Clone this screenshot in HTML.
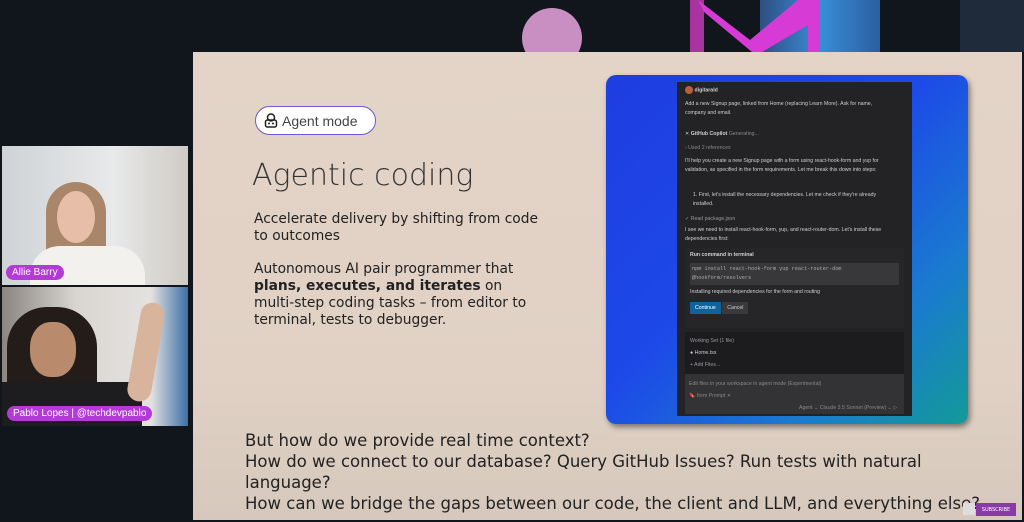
<!DOCTYPE html>
<html><head><meta charset="utf-8"><style>
*{margin:0;padding:0;box-sizing:border-box}
body{width:1024px;height:522px;overflow:hidden;background:#11151c;font-family:"DejaVu Sans","Liberation Sans",sans-serif;position:relative}
.abs{position:absolute}
.slide{left:193px;top:52px;width:829px;height:468px;background:linear-gradient(#e3d4c7,#e0d1c4 70%,#d6c8bc)}
.pill{left:255px;top:106px;width:121px;height:29px;border:1.5px solid #6a5bd0;border-radius:15px;background:#fff;font-family:"Liberation Sans",sans-serif;font-size:14px;color:#444;padding:6px 0 0 26px}
.t{color:#222;font-size:13.8px;line-height:17px}
.card{left:606px;top:75px;width:362px;height:349px;border-radius:10px;background:linear-gradient(135deg,#1e3de0 0%,#1d49e8 45%,#1a7ad0 75%,#139a98 100%);box-shadow:2px 3px 6px rgba(0,0,0,.45)}
.panel{left:677px;top:82px;width:235px;height:334px;background:#232325;color:#cfcfcf;font-size:5.2px;line-height:9px;padding:4px 8px;font-family:"Liberation Sans",sans-serif;overflow:hidden}
.panel>div{position:absolute;left:8px;right:8px}
.cam{background:#d9d6d2;overflow:hidden}
.tag{background:#b43ad8;color:#fff;font-family:"Liberation Sans",sans-serif;font-size:10px;border-radius:8px;padding:2px 6px;position:absolute}
.q{font-size:16.5px;color:#222;left:245px;line-height:21px}
</style></head><body>
<div class="abs" style="left:522px;top:8px;width:60px;height:60px;border-radius:50%;background:#c98fc3"></div>
<div class="abs" style="left:690px;top:0;width:14px;height:52px;background:#a8359f"></div>
<div class="abs" style="left:760px;top:0;width:120px;height:52px;background:linear-gradient(90deg,#2e4f82,#3a8dd8,#2a5fa0)"></div>
<svg class="abs" style="left:690px;top:0" width="220" height="52"><path d="M8 0 L60 40 L108 0 L130 0 L130 52 L118 52 L118 25 L72 52 L62 52 L14 12 Z" fill="#d73bd6"/></svg>
<div class="abs" style="left:960px;top:0;width:64px;height:52px;background:#1f2a3a"></div>

<div class="abs slide"></div>
<div class="abs pill"><svg class="abs" style="left:8px;top:6px" width="14" height="15" viewBox="0 0 14 15"><circle cx="7" cy="4.5" r="3.5" fill="none" stroke="#222" stroke-width="1.5"/><rect x="1.5" y="7" width="11" height="7" rx="2" fill="none" stroke="#222" stroke-width="1.5"/><circle cx="5" cy="10.5" r="1" fill="#222"/><circle cx="9" cy="10.5" r="1" fill="#222"/></svg>Agent mode</div>
<div class="abs" style="left:252px;top:158px;font-size:30px;font-weight:200;color:#333;font-family:'DejaVu Sans',sans-serif">Agentic coding</div>
<div class="abs t" style="left:254px;top:211px">Accelerate delivery by shifting from code<br>to outcomes</div>
<div class="abs t" style="left:254px;top:261px">Autonomous AI pair programmer that<br><b>plans, executes, and iterates</b> on<br>multi-step coding tasks – from editor to<br>terminal, tests to debugger.</div>

<div class="abs card"></div>
<div class="abs panel">
<div style="top:4px"><span style="display:inline-block;width:8px;height:8px;border-radius:50%;background:#b8603e;vertical-align:middle"></span> <b>digitarald</b></div>
<div style="top:18px;right:20px">Add a new Signup page, linked from Home (replacing Learn More). Ask for name, company and email.</div>
<div style="top:48px">✕ <b>GitHub Copilot</b> <span style="color:#888">Generating...</span></div>
<div style="top:62px;color:#888">› Used 2 references</div>
<div style="top:75px;right:12px">I'll help you create a new Signup page with a form using react-hook-form and yup for validation, as specified in the form requirements. Let me break this down into steps:</div>
<div style="top:109px;left:16px;right:20px">1. First, let's install the necessary dependencies. Let me check if they're already installed.</div>
<div style="top:133px;color:#999">✓ Read package.json</div>
<div style="top:144px;right:14px">I see we need to install react-hook-form, yup, and react-router-dom. Let's install these dependencies first:</div>
<div style="top:166px;height:80px;background:#262628;padding:3px 5px">
<b>Run command in terminal</b>
<div style="background:#38383a;font-family:'Liberation Mono',monospace;color:#aaa;padding:2px;margin-top:3px;line-height:9px">npm install react-hook-form yup react-router-dom<br>@hookform/resolvers</div>
<div style="margin-top:3px">Installing required dependencies for the form and routing</div>
<div style="margin-top:7px"><span style="background:#0e639c;color:#fff;padding:3px 5px">Continue</span> <span style="background:#3a3a3c;padding:3px 5px">Cancel</span></div>
</div>
<div style="top:250px;height:48px;background:#1c1c1e;padding:3px 5px;color:#999;line-height:12px">Working Set (1 file)<br><span style="color:#ccc">● Home.tsx</span><br>+ Add Files...</div>
<div style="top:292px;height:40px;background:#333335;padding:4px 4px;color:#888;line-height:12px">Edit files in your workspace in agent mode (Experimental)<br>🔖 form Prompt ✕<br><span style="margin-left:110px;white-space:nowrap">Agent ⌄ Claude 3.5 Sonnet (Preview) ⌄ ▷</span></div>
</div>

<div class="abs q" style="top:430px">But how do we provide real time context?<br>How do we connect to our database? Query GitHub Issues? Run tests with natural<br>language?<br>How can we bridge the gaps between our code, the client and LLM, and everything else?</div>
<div class="abs" style="left:963px;top:503px;width:12px;height:12px;background:#ddd"></div>
<div class="abs" style="left:976px;top:503px;width:40px;height:13px;background:#8a3aa6;color:#fff;font-size:5px;padding-top:4px;text-align:center">SUBSCRIBE</div>

<div class="abs cam" style="left:2px;top:146px;width:186px;height:139px;background:linear-gradient(90deg,#cfd3d6,#e8e9ea 60%,#cfcac4)">
<div class="abs" style="left:44px;top:36px;width:60px;height:100px;border-radius:30px 30px 0 0;background:#a9866a"></div>
<div class="abs" style="left:55px;top:45px;width:38px;height:52px;border-radius:50%;background:#e7bfa8"></div>
<div class="abs" style="left:28px;top:100px;width:115px;height:40px;border-radius:30px 30px 0 0;background:#f3f1ee"></div>
<span class="tag" style="left:4px;top:119px">Allie Barry</span></div>
<div class="abs cam" style="left:2px;top:287px;width:186px;height:139px;background:linear-gradient(90deg,#8a8580,#d9d6d2 40%,#e4e2df 80%,#3b6fa8)">
<div class="abs" style="left:5px;top:20px;width:90px;height:110px;border-radius:40px 40px 10px 10px;background:#231c18"></div>
<div class="abs" style="left:28px;top:35px;width:46px;height:55px;border-radius:45%;background:#b98a6c"></div>
<div class="abs" style="left:0;top:95px;width:140px;height:44px;background:#1d1d1f"></div>
<div class="abs" style="left:132px;top:15px;width:24px;height:100px;border-radius:12px;background:#d8b49c;transform:rotate(10deg)"></div>
<span class="tag" style="left:5px;top:119px">Pablo Lopes | @techdevpablo</span></div>
</body></html>
